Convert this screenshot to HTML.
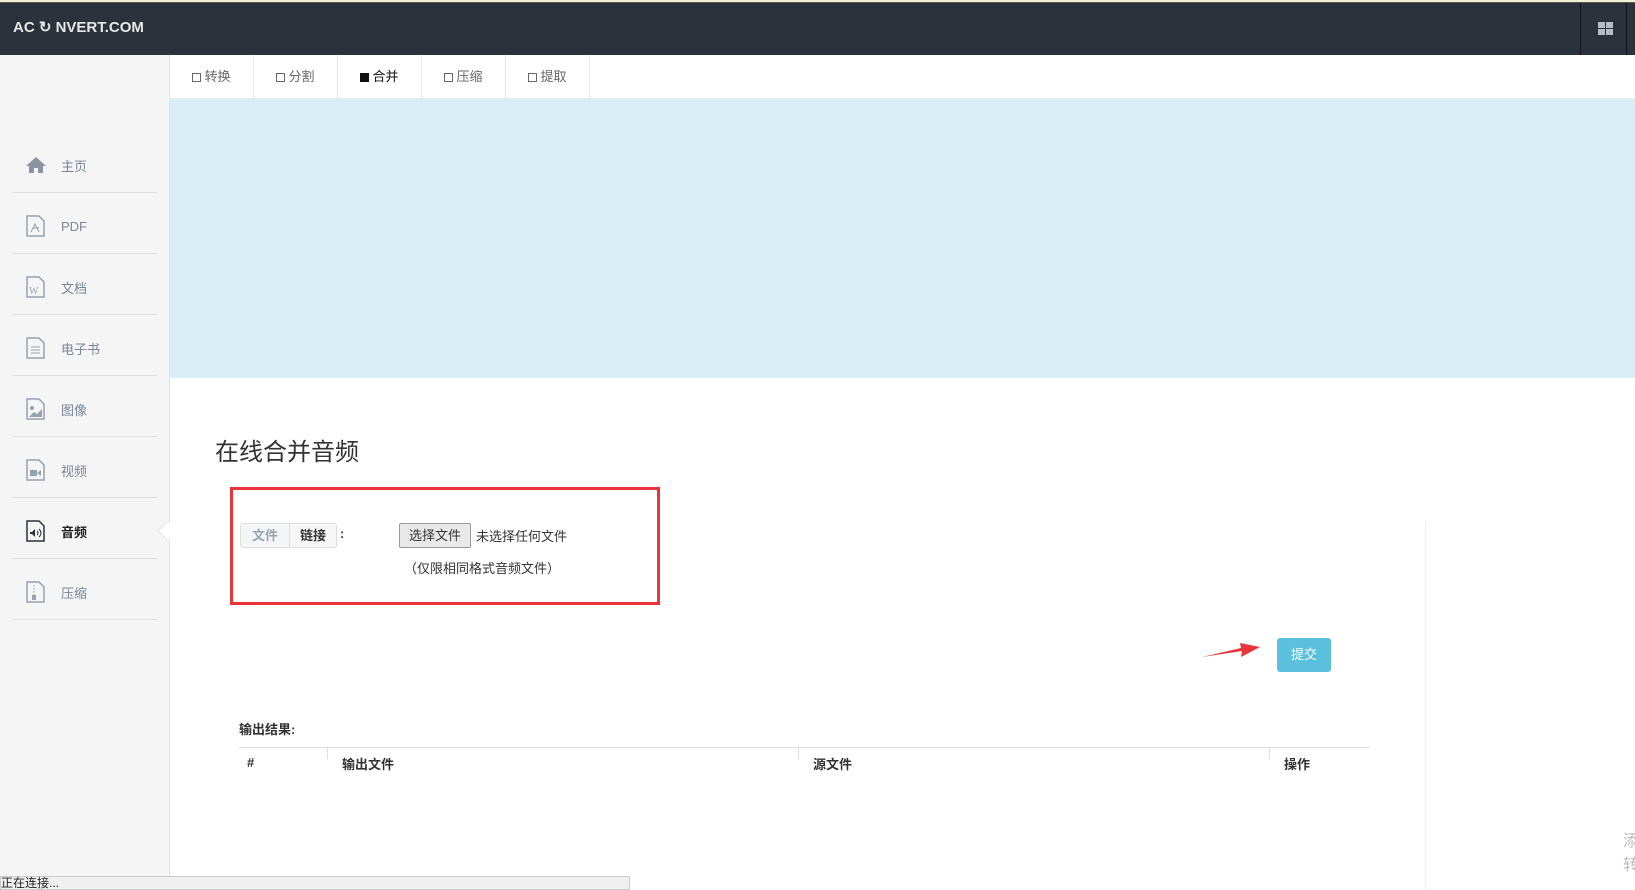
<!DOCTYPE html>
<html><head><meta charset="utf-8"><style>
*{margin:0;padding:0;box-sizing:border-box}
body{width:1635px;height:890px;position:relative;overflow:hidden;background:#fff;font-family:"Liberation Sans","Noto Sans CJK SC",sans-serif;font-size:13px;color:#333}
.a{position:absolute}
.top{left:0;top:0;width:1635px;height:3px;background:#f3f1d6;border-bottom:1px solid #555}
.hdr{left:0;top:3px;width:1635px;height:52px;background:#2b323b}
.logo{left:13px;top:18px;color:#e8e8e8;font-weight:bold;font-size:15px;letter-spacing:0}
.side{left:0;top:55px;width:170px;height:835px;background:#f5f5f5;border-right:1px solid #e2e2e2}
.it{left:25px;width:140px;height:20px;color:#7a8595;font-size:13px;display:flex;align-items:center}
.it svg{margin-right:14px}
.sep{left:12px;width:145px;height:1px;background:#e0e0e0}
.tab{top:55px;height:43px;width:84px;border-right:1px solid #e5e5e5;text-align:center;line-height:43px;color:#666;font-size:13px}
.tab b{display:inline-block;width:9px;height:9px;border:1px solid #666;margin-right:3px;vertical-align:-1px}
.banner{left:170px;top:98px;width:1465px;height:280px;background:#d9edf7}
</style></head><body>
<div class="a top"></div>
<div class="a hdr"></div>
<div class="a logo">AC <span style="font-size:15px">&#x21bb;</span> NVERT.COM</div>
<div class="a" style="left:1580px;top:3px;width:1px;height:52px;background:#111"></div>
<div class="a" style="left:1626px;top:3px;width:1px;height:52px;background:#111"></div>
<div class="a" style="left:1598px;top:22px;width:7px;height:6px;background:#b5bcc6"></div>
<div class="a" style="left:1606px;top:22px;width:7px;height:6px;background:#b5bcc6"></div>
<div class="a" style="left:1598px;top:29px;width:7px;height:6px;background:#b5bcc6"></div>
<div class="a" style="left:1606px;top:29px;width:7px;height:6px;background:#b5bcc6"></div>

<div class="a side"></div>
<div class="a it" style="top:155px"><svg width="22" height="18" viewBox="0 0 22 18"><path d="M11 1L1 10h3v7h5v-5h4v5h5v-7h3z" fill="#8a94a3"/></svg>主页</div>
<div class="a sep" style="top:192px"></div>
<div class="a it" style="top:216px"><svg width="22" height="22" viewBox="0 0 22 22"><path d="M2 1h12l5 5v15H2z" fill="none" stroke="#98a1ae" stroke-width="1.5"/><path d="M6 17l4-8 4 8M8 13h6" fill="none" stroke="#98a1ae"/></svg>PDF</div>
<div class="a sep" style="top:253px"></div>
<div class="a it" style="top:277px"><svg width="22" height="22" viewBox="0 0 22 22"><path d="M2 1h12l5 5v15H2z" fill="none" stroke="#98a1ae" stroke-width="1.5"/><text x="4" y="18" font-size="10" fill="#98a1ae" font-family="Liberation Serif">W</text></svg>文档</div>
<div class="a sep" style="top:314px"></div>
<div class="a it" style="top:338px"><svg width="22" height="22" viewBox="0 0 22 22"><path d="M2 1h12l5 5v15H2z" fill="none" stroke="#98a1ae" stroke-width="1.5"/><path d="M6 10h9M6 13h9M6 16h9" stroke="#98a1ae"/></svg>电子书</div>
<div class="a sep" style="top:375px"></div>
<div class="a it" style="top:399px"><svg width="22" height="22" viewBox="0 0 22 22"><path d="M2 1h12l5 5v15H2z" fill="none" stroke="#98a1ae" stroke-width="1.5"/><circle cx="7" cy="10" r="2" fill="#98a1ae"/><path d="M4 19l5-5 3 2 5-5v8z" fill="#98a1ae"/></svg>图像</div>
<div class="a sep" style="top:436px"></div>
<div class="a it" style="top:460px"><svg width="22" height="22" viewBox="0 0 22 22"><path d="M2 1h12l5 5v15H2z" fill="none" stroke="#98a1ae" stroke-width="1.5"/><rect x="5" y="11" width="7" height="6" fill="#98a1ae"/><path d="M12 14l4-3v6z" fill="#98a1ae"/></svg>视频</div>
<div class="a sep" style="top:497px"></div>
<div class="a it" style="top:521px;color:#222;font-weight:bold"><svg width="22" height="22" viewBox="0 0 22 22"><path d="M2 1h12l5 5v15H2z" fill="none" stroke="#2b323b" stroke-width="1.5"/><path d="M5 12h2l3-3v8l-3-3H5z" fill="#2b323b"/><path d="M12 11q2 2 0 4M14 9q4 4 0 8" fill="none" stroke="#2b323b"/></svg>音频</div>
<div class="a" style="left:160px;top:524px;width:14px;height:14px;background:#fff;border-left:1px solid #e2e2e2;border-bottom:1px solid #e2e2e2;transform:rotate(45deg)"></div>
<div class="a sep" style="top:558px"></div>
<div class="a it" style="top:582px"><svg width="22" height="22" viewBox="0 0 22 22"><path d="M2 1h12l5 5v15H2z" fill="none" stroke="#98a1ae" stroke-width="1.5"/><path d="M9 4v10" stroke="#98a1ae" stroke-dasharray="1.5 1.5"/><rect x="7" y="14" width="4" height="5" fill="#98a1ae"/></svg>压缩</div>
<div class="a sep" style="top:619px"></div>

<div class="a tab" style="left:170px"><b></b>转换</div>
<div class="a tab" style="left:254px"><b></b>分割</div>
<div class="a tab" style="left:338px;color:#111"><b style="background:#111;border-color:#111"></b>合并</div>
<div class="a tab" style="left:422px"><b></b>压缩</div>
<div class="a tab" style="left:506px"><b></b>提取</div>
<div class="a banner"></div>

<div class="a" style="left:215px;top:432px;font-size:24px;color:#333">在线合并音频</div>
<div class="a" style="left:230px;top:487px;width:430px;height:118px;border:3px solid #e8343a"></div>
<div class="a" style="left:240px;top:523px;width:50px;height:25px;border:1px solid #ddd;background:#f3f5f7;color:#9aa4b0;text-align:center;line-height:23px;font-weight:bold;border-radius:3px 0 0 3px">文件</div>
<div class="a" style="left:289px;top:523px;width:48px;height:25px;border:1px solid #ddd;background:#f7f7f7;color:#333;text-align:center;line-height:23px;font-weight:bold;border-radius:0 3px 3px 0">链接</div>
<div class="a" style="left:340px;top:526px;font-weight:bold">:</div>
<div class="a" style="left:399px;top:523px;width:72px;height:25px;border:1px solid #999;background:#e9e9e9;border-radius:2px;text-align:center;line-height:23px;font-size:13px">选择文件</div>
<div class="a" style="left:476px;top:526px">未选择任何文件</div>
<div class="a" style="left:404px;top:558px">（仅限相同格式音频文件）</div>

<svg class="a" style="left:1200px;top:640px" width="62" height="20"><path d="M2 17L42 11l-1 6 19-10-20-4 1 5z" fill="#e8343a"/></svg>
<div class="a" style="left:1277px;top:638px;width:54px;height:34px;background:#5bc0de;border-radius:3px;color:#fff;text-align:center;line-height:34px">提交</div>

<div class="a" style="left:1425px;top:522px;width:1px;height:368px;background:#eee"></div>
<div class="a" style="left:239px;top:719px;font-weight:bold">输出结果:</div>
<div class="a" style="left:239px;top:747px;width:1131px;height:1px;background:#ddd"></div>
<div class="a" style="left:327px;top:747px;width:1px;height:12px;background:#ddd"></div>
<div class="a" style="left:798px;top:747px;width:1px;height:12px;background:#ddd"></div>
<div class="a" style="left:1269px;top:747px;width:1px;height:12px;background:#ddd"></div>
<div class="a" style="left:247px;top:755px;font-weight:bold">#</div>
<div class="a" style="left:342px;top:754px;font-weight:bold">输出文件</div>
<div class="a" style="left:813px;top:754px;font-weight:bold">源文件</div>
<div class="a" style="left:1284px;top:754px;font-weight:bold">操作</div>

<div class="a" style="left:1623px;top:830px;color:#bbb;font-size:16px;line-height:24px">添<br>转</div>
<div class="a" style="left:0;top:876px;width:630px;height:14px;background:#f0f0f0;border:1px solid #ccc;font-size:12px;line-height:13px;color:#222">正在连接...</div>
</body></html>
